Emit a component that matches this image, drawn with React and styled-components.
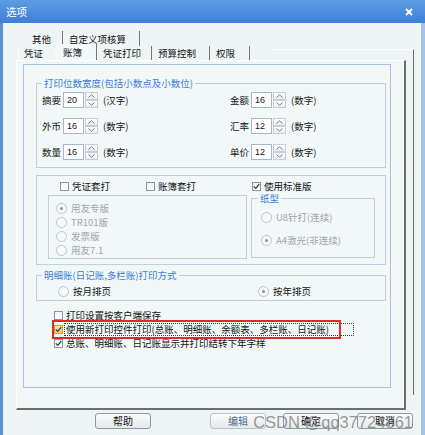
import styled, { createGlobalStyle } from 'styled-components';

const GlobalStyle = createGlobalStyle`
  html, body { margin: 0; padding: 0; }
  body {
    width: 425px;
    height: 435px;
    overflow: hidden;
    font-family: "Noto Sans CJK SC", "DejaVu Sans", sans-serif;
    font-size: 9.5px;
    line-height: 12px;
    color: #141414;
  }
`;

const Window = styled.div`
  position: relative;
  width: 425px;
  height: 435px;
  display: flex;
  flex-direction: column;
  background: #eef6f5;
`;

const TitleBar = styled.div`
  height: 23px;
  flex: none;
  display: flex;
  align-items: center;
  justify-content: space-between;
  padding: 0 12px 0 6px;
  background: linear-gradient(#5d9ce3, #3f7fd6);
  color: #fff;
  font-size: 10.5px;
`;

const Client = styled.div`
  flex: 1;
  display: flex;
  flex-direction: column;
  border-left: 3px solid #5b8fd4;
  border-right: 4px solid #a3c3e8;
  padding: 8px 0 0 13px;
`;

const TabStack = styled.div`
  position: relative;
  width: 390px;

  &::after {
    content: '';
    position: absolute;
    left: 255px;
    right: -8px;
    top: 18px;
    bottom: 15px;
    border-top: 1px solid #fafdfd;
    border-right: 1px solid #6c6c6c;
    pointer-events: none;
  }
`;

const TabRow = styled.div`
  display: flex;
  height: ${p => p.$h}px;
  padding-left: ${p => p.$indent}px;
`;

const Tab = styled.div`
  box-sizing: border-box;
  width: ${p => p.$w}px;
  display: flex;
  align-items: center;
  padding-left: ${p => (p.$active ? 7 : 5)}px;
  border-right: 1px solid ${p => (p.$plain ? 'transparent' : '#767676')};
  border-left: 1px solid ${p => (p.$front ? '#ffffff' : 'transparent')};
  background: ${p => (p.$active ? '#f3f9f9' : 'transparent')};
  margin-top: ${p => (p.$active ? -2 : 0)}px;
`;

const Sheet = styled.div`
  border-top: 1px solid #ffffff;
  border-left: 1px solid #ffffff;
  border-right: 2px solid #6e6e6e;
  border-bottom: 2px solid #6e6e6e;
  padding: 3px 13px 20px 6px;
  background: #f1f8f7;
`;

const InnerBox = styled.div`
  box-sizing: border-box;
  width: 368px;
  height: 324px;
  border: 1px solid #a9c5dd;
  padding: 0 4px 0 12px;
  display: flex;
  flex-direction: column;
`;

const Group = styled.fieldset`
  min-width: 0;
  margin: ${p => p.$mt || 0}px 0 0;
  padding: ${p => p.$pad};
  border: 1px solid #bcd0de;
`;

const Legend = styled.legend`
  padding: 0 2px;
  margin-left: ${p => p.$ml || 0}px;
  line-height: 12px;
  color: #3b7dd8;
`;

const FieldGrid = styled.div`
  display: grid;
  grid-template-columns: 188px 1fr;
  grid-auto-rows: 16px;
  row-gap: 10px;
`;

const Field = styled.div`
  display: flex;
  align-items: center;
`;

const FieldLabel = styled.span`
  width: 18px;
  margin-right: 3px;
  white-space: nowrap;
`;

const Input = styled.div`
  box-sizing: border-box;
  width: 21px;
  height: 16px;
  border: 1px solid #a6b8c6;
  background: #fff;
  display: flex;
  align-items: center;
  padding-left: 3px;
  font-family: "Liberation Sans", sans-serif;
  font-size: 9px;
`;

const Spinner = styled.div`
  margin-left: 1px;
  width: 13px;
  height: 16px;
  display: flex;
  flex-direction: column;
`;

const SpinHalf = styled.div`
  box-sizing: border-box;
  height: 8px;
  border: 1px solid #c3ced7;
  background: linear-gradient(#ffffff, #e9eff2);
  display: flex;
  align-items: center;
  justify-content: center;
`;

const Unit = styled.span`
  margin-left: 5px;
`;

const CheckRow = styled.div`
  display: grid;
  grid-template-columns: 199px 1fr;
  column-gap: 4px;
  height: 12px;
`;

const CheckCell = styled.div`
  display: flex;
  padding-left: ${p => p.$pl}px;
`;

const Item = styled.div`
  display: flex;
  align-items: center;
  gap: 3px;
  width: ${p => (p.$w ? `${p.$w}px` : 'auto')};
  height: 12px;
  color: ${p => (p.$disabled ? '#9ea7ad' : 'inherit')};
  white-space: nowrap;
`;

const Box = styled.span`
  box-sizing: border-box;
  width: 9px;
  height: 9px;
  flex: none;
  border: 1px solid ${p => (p.$hot ? '#d2a24a' : '#8497a6')};
  background: ${p => (p.$hot ? 'linear-gradient(#fbe7a8, #f3c766)' : 'linear-gradient(#eef2f4, #ffffff)')};
  display: flex;
  align-items: center;
  justify-content: center;
`;

const Circle = styled.span`
  box-sizing: border-box;
  width: 11px;
  height: 11px;
  flex: none;
  border-radius: 50%;
  border: 1px solid #bcc6cd;
  background: #f6f9fa;
  display: flex;
  align-items: center;
  justify-content: center;
  margin-right: 1px;

  &::after {
    content: '';
    width: 3px;
    height: 3px;
    border-radius: 50%;
    background: ${p => (p.$on ? '#8a9399' : 'transparent')};
  }
`;

const LowerGrid = styled.div`
  display: grid;
  grid-template-columns: 199px 1fr;
  column-gap: 4px;
  align-items: start;
  margin-top: 3px;
`;

const PlainBox = styled.div`
  box-sizing: border-box;
  height: 64px;
  border: 1px solid #bcd0de;
  padding: 6px 0 0 7px;
  display: flex;
  flex-direction: column;
  gap: 2px;
`;

const PaperGroup = styled(Group)`
  margin-top: -1px;
  display: flex;
  flex-direction: column;
  gap: 11px;

  & > legend {
    line-height: 8px;
  }
`;

const RadioGrid = styled.div`
  display: grid;
  grid-template-columns: 200px 1fr;
  padding-left: 16px;
`;

const CheckList = styled.div`
  margin-top: 8px;
  padding-left: 18px;
  display: flex;
  flex-direction: column;
  gap: 2px;
`;

const Marked = styled.div`
  position: relative;

  &::before {
    content: '';
    position: absolute;
    left: -2px;
    top: -3px;
    width: 289px;
    height: 19px;
    box-sizing: border-box;
    border: 2px solid #e5262b;
    pointer-events: none;
  }
`;

const FocusText = styled.span`
  box-sizing: border-box;
  width: 290px;
  margin-left: -2px;
  padding-left: 1px;
  border: 1px dotted #3c3c3c;
  line-height: 11px;
`;

const ButtonRow = styled.div`
  display: flex;
  margin-top: 3px;
  padding-left: 79px;
`;

const Button = styled.div`
  box-sizing: border-box;
  width: 56px;
  height: 16px;
  margin-left: ${p => p.$ml || 0}px;
  border: 1px solid ${p => (p.$disabled ? '#b9c3cb' : '#8b98a4')};
  border-radius: 3px;
  background: linear-gradient(#fdfdfd, #e3e8eb);
  color: ${p => (p.$disabled ? '#4d6b8c' : '#111')};
  display: flex;
  align-items: center;
  justify-content: center;
  font-size: 10px;
`;

const Watermark = styled.div`
  position: absolute;
  right: 12px;
  bottom: 3px;
  font-family: "Liberation Sans", sans-serif;
  font-size: 16.5px;
  line-height: 20px;
  color: rgba(115, 115, 115, 0.72);
  pointer-events: none;
`;

function Tick() {
  return (
    <svg width="7" height="7" viewBox="0 0 7 7">
      <path d="M0.8 3.4 L2.8 5.4 L6.2 1.2" stroke="#2f3a42" strokeWidth="1.3" fill="none" />
    </svg>
  );
}

function Check({ label, checked, hot, w }) {
  return (
    <Item $w={w}>
      <Box $hot={hot}>{checked && <Tick />}</Box>
      {label}
    </Item>
  );
}

function Radio({ label, on, disabled }) {
  return (
    <Item $disabled={disabled}>
      <Circle $on={on} />
      {label}
    </Item>
  );
}

function SpinField({ label, value, unit }) {
  return (
    <Field>
      <FieldLabel>{label}</FieldLabel>
      <Input>{value}</Input>
      <Spinner>
        <SpinHalf>
          <svg width="7" height="4" viewBox="0 0 7 4">
            <polyline points="0.5,3.5 3.5,0.8 6.5,3.5" stroke="#6e808e" fill="none" />
          </svg>
        </SpinHalf>
        <SpinHalf>
          <svg width="7" height="4" viewBox="0 0 7 4">
            <polyline points="0.5,0.5 3.5,3.2 6.5,0.5" stroke="#6e808e" fill="none" />
          </svg>
        </SpinHalf>
      </Spinner>
      <Unit>{unit}</Unit>
    </Field>
  );
}

export default function App() {
  return (
    <Window>
      <GlobalStyle />
      <TitleBar>
        <span>选项</span>
        <svg width="8" height="8" viewBox="0 0 8 8">
          <path d="M1 1 L7 7 M7 1 L1 7" stroke="#fff" strokeWidth="2" />
        </svg>
      </TitleBar>
      <Client>
        <TabStack>
          <TabRow $h={15} $indent={10}>
            <Tab $w={37}>其他</Tab>
            <Tab $w={77}>自定义项核算</Tab>
          </TabRow>
          <TabRow $h={14} $indent={2}>
            <Tab $w={37} $front $plain>凭证</Tab>
            <Tab $w={42} $active>账簿</Tab>
            <Tab $w={55}>凭证打印</Tab>
            <Tab $w={58}>预算控制</Tab>
            <Tab $w={40}>权限</Tab>
          </TabRow>
          <Sheet>
            <InnerBox>
              <Group $mt={12} $pad="3px 0 7px 5px">
                <Legend>打印位数宽度(包括小数点及小数位)</Legend>
                <FieldGrid>
                  <SpinField label="摘要" value="20" unit="(汉字)" />
                  <SpinField label="金额" value="16" unit="(数字)" />
                  <SpinField label="外币" value="16" unit="(数字)" />
                  <SpinField label="汇率" value="12" unit="(数字)" />
                  <SpinField label="数量" value="16" unit="(数字)" />
                  <SpinField label="单价" value="12" unit="(数字)" />
                </FieldGrid>
              </Group>

              <Group $mt={7} $pad="4px 10px 5px 11px">
                <CheckRow>
                  <CheckCell $pl={12}>
                    <Check label="凭证套打" w={86} />
                    <Check label="账簿套打" />
                  </CheckCell>
                  <CheckCell $pl={1}>
                    <Check label="使用标准版" checked />
                  </CheckCell>
                </CheckRow>
                <LowerGrid>
                  <PlainBox>
                    <Radio label="用友专版" on disabled />
                    <Radio label="TR101版" disabled />
                    <Radio label="发票版" disabled />
                    <Radio label="用友7.1" disabled />
                  </PlainBox>
                  <PaperGroup $pad="9px 0 11px 9px">
                    <Legend $ml={-3}>纸型</Legend>
                    <Radio label="U8针打(连续)" disabled />
                    <Radio label="A4激光(非连续)" on disabled />
                  </PaperGroup>
                </LowerGrid>
              </Group>

              <Group $mt={4} $pad="4px 0 3px 5px">
                <Legend>明细账(日记账,多栏账)打印方式</Legend>
                <RadioGrid>
                  <Radio label="按月排页" />
                  <Radio label="按年排页" on />
                </RadioGrid>
              </Group>

              <CheckList>
                <Check label="打印设置按客户端保存" />
                <Marked>
                  <Item>
                    <Box $hot><Tick /></Box>
                    <FocusText>使用新打印控件打印(总账、明细账、余额表、多栏账、日记账)</FocusText>
                  </Item>
                </Marked>
                <Check label="总账、明细账、日记账显示并打印结转下年字样" checked />
              </CheckList>
            </InnerBox>
          </Sheet>
        </TabStack>
        <ButtonRow>
          <Button>帮助</Button>
          <Button $ml={59} $disabled>编辑</Button>
          <Button $ml={17}>确定</Button>
          <Button $ml={18}>取消</Button>
        </ButtonRow>
      </Client>
      <Watermark>CSDN @qq37724861</Watermark>
    </Window>
  );
}
